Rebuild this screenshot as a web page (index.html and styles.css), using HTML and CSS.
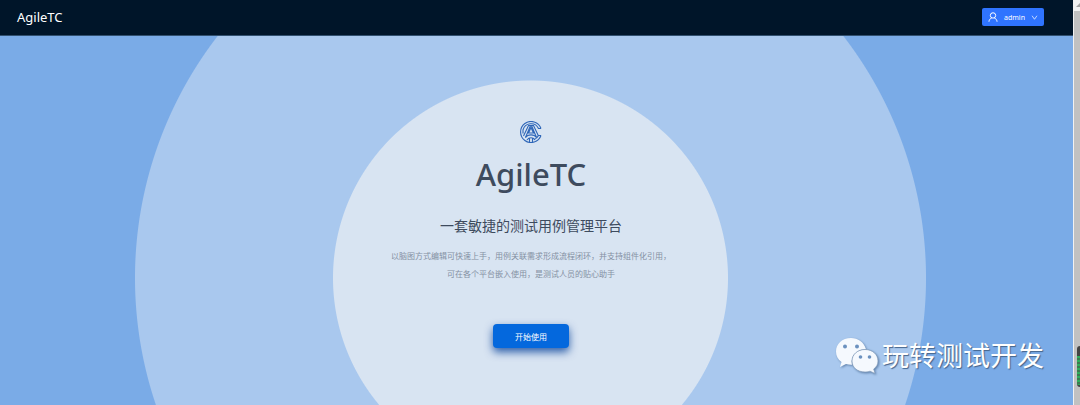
FILE: index.html
```html
<!DOCTYPE html>
<html lang="zh-CN">
<head>
    <meta charset="UTF-8">
    <meta name="viewport" content="width=device-width, initial-scale=1.0">
    <title>AgileTC</title>
    <link rel="stylesheet" href="styles.css">
</head>
<body>
    <div class="page">
        <header class="header">
            <a class="brand" href="/">AgileTC</a>
            <button type="button" class="user-btn">
                <svg class="user-icon" viewBox="0 0 16 16" fill="none" stroke="currentColor" stroke-width="1.6">
                    <circle cx="8" cy="5.5" r="4.3"></circle>
                    <path d="M1.5 15.5c.3-3.200 2-5 4.500-6M14.500 15.500c-.3-3.200-2-5-4.500-6"></path>
                </svg>
                <span>admin</span>
                <svg class="arrow-icon" viewBox="0 0 10 10" fill="none" stroke="currentColor">
                    <path d="M1.500 2.500L5 7.500l3.500-5"></path>
                </svg>
            </button>
        </header>
        <main class="hero">
            <svg class="logo" viewBox="0 0 44 44" fill="none" stroke="#2e66b8" stroke-width="2.2">
                <path d="M42 15A21 21 0 1 0 42 29"></path>
                <path d="M42 15h-5A16.500 16.500 0 0 0 6 18v7M42 29h-5a16.500 16.500 0 0 1-9 8"></path>
                <path d="M7 30L17 9h4l-10 24M37 30L27 9h-4l10 24M17 24l5-11 5 11z"></path>
                <path d="M11 33c5-7 17-7 22 0M14 38c4-6 12-6 16 0M19 34v9M25 34v9"></path>
            </svg>
            <h1>AgileTC</h1>
            <h2>一套敏捷的测试用例管理平台</h2>
            <p>以脑图方式编辑可快速上手，用例关联需求形成流程闭环，并支持组件化引用，<br>可在各个平台嵌入使用，是测试人员的贴心助手</p>
            <button type="button" class="start-btn">开始使用</button>
        </main>
    </div>
    <div class="scrollbar">
        <svg class="scroll-up" viewBox="0 0 6 11">
            <path fill="#a3a3a3" d="M2 7l4-4v4z"></path>
        </svg>
        <div class="meter"></div>
    </div>
    <div class="watermark">
        <svg class="wechat" viewBox="0 0 44 38">
            <path fill="#f5f9fe" d="M16 1C7 1 1 7 1 14.500c0 4.500 2 8 5.500 10.500L5 30l6-3c2 .6 4 .8 6 .7C15 18 23 12 31 12.300 29 5 23 1 16 1z"></path>
            <path fill="#f5f9fe" stroke="#8099b8" stroke-width=".7" d="M30 12.500c-7.500 0-13 5-13 11.500s5.500 11 13 11c2 0 3.500-.2 5-.8l5 2.300-1.300-4.500c3-2 4.300-5 4.300-8 0-6.500-5.500-11.500-13-11.500z"></path>
            <g fill="#6b91bf">
                <circle cx="10" cy="9.500" r="2"></circle>
                <circle cx="22" cy="9.500" r="2"></circle>
                <circle cx="25.500" cy="20" r="1.800"></circle>
                <circle cx="34.500" cy="20" r="1.800"></circle>
            </g>
        </svg>
        <span>玩转测试开发</span>
    </div>
</body>
</html>
```
FILE: styles.css
```css
* {
    margin: 0;
    padding: 0;
    box-sizing: border-box;
}

body {
    display: flex;
    min-height: 100vh;
    position: relative;
    font-family: 'Noto Sans', 'Noto Sans CJK SC', sans-serif;
    overflow: hidden;
}

.page {
    flex: 1;
    display: flex;
    flex-direction: column;
}

.header {
    display: flex;
    justify-content: space-between;
    align-items: center;
    height: 36px;
    padding: 0 29px 1px 17px;
    background-color: #001529;
    border-bottom: 1px solid #31506f;
}

.brand {
    color: #fff;
    font-size: 13px;
    text-decoration: none;
}

.user-btn {
    display: flex;
    align-items: center;
    gap: 6px;
    height: 18px;
    padding: 0 6px;
    background-color: #2f74ff;
    border: none;
    border-radius: 2px;
    color: #fff;
    font-family: inherit;
    font-size: 7px;
    cursor: pointer;
}

.user-icon {
    width: 10px;
    height: 10px;
}

.arrow-icon {
    width: 7px;
    height: 7px;
}

.hero {
    flex: 1;
    display: flex;
    flex-direction: column;
    align-items: center;
    padding: 85px 11px 0 0;
    background: radial-gradient(circle at calc(50% - 6px) 242px, #d8e4f2 197px, #a9c8ee 198px, #a9c8ee 395px, #7aabe7 396px);
}

.logo {
    width: 22px;
    height: 22px;
}

.hero h1 {
    margin-top: 9px;
    color: #3e4b5e;
    font-size: 31px;
    font-weight: 500;
    line-height: 44px;
}

.hero h2 {
    margin-top: 20px;
    color: #3e4b5e;
    font-size: 14px;
    font-weight: 400;
    line-height: 20px;
}

.hero p {
    margin-top: 11px;
    color: #8490a3;
    font-size: 8px;
    line-height: 18px;
    text-align: center;
}

.start-btn {
    width: 76px;
    height: 24px;
    margin-top: 41px;
    background-color: #0468dd;
    border: none;
    border-radius: 4px;
    box-shadow: 0 4px 8px rgba(0, 60, 150, 0.8);
    color: #fff;
    font-family: inherit;
    font-size: 8px;
    cursor: pointer;
}

.scrollbar {
    display: flex;
    flex-direction: column;
    justify-content: space-between;
    align-items: flex-end;
    width: 7px;
    padding-bottom: 18px;
    background-color: #c1c1c1;
    border-left: 1px solid #f1f1f1;
}

.scroll-up {
    width: 6px;
    height: 11px;
    background-color: #f1f1f1;
}

.meter {
    width: 3px;
    height: 41px;
    border-top: 10px solid #444;
    border-bottom: 2px solid #444;
    border-radius: 3px 0 0 3px;
    background: repeating-linear-gradient(#2fae5c 0 2px, #3d7a50 2px 4px);
}

.watermark {
    position: absolute;
    right: 36px;
    bottom: 29px;
    display: flex;
    align-items: center;
    gap: 3px;
    color: #fff;
    font-size: 27px;
    font-weight: 400;
    line-height: 40px;
    text-shadow: 1px 1px 1px #44648c;
}

.wechat {
    width: 44px;
    height: 38px;
    filter: drop-shadow(1px 1px 1px #5f81ab);
}
```
